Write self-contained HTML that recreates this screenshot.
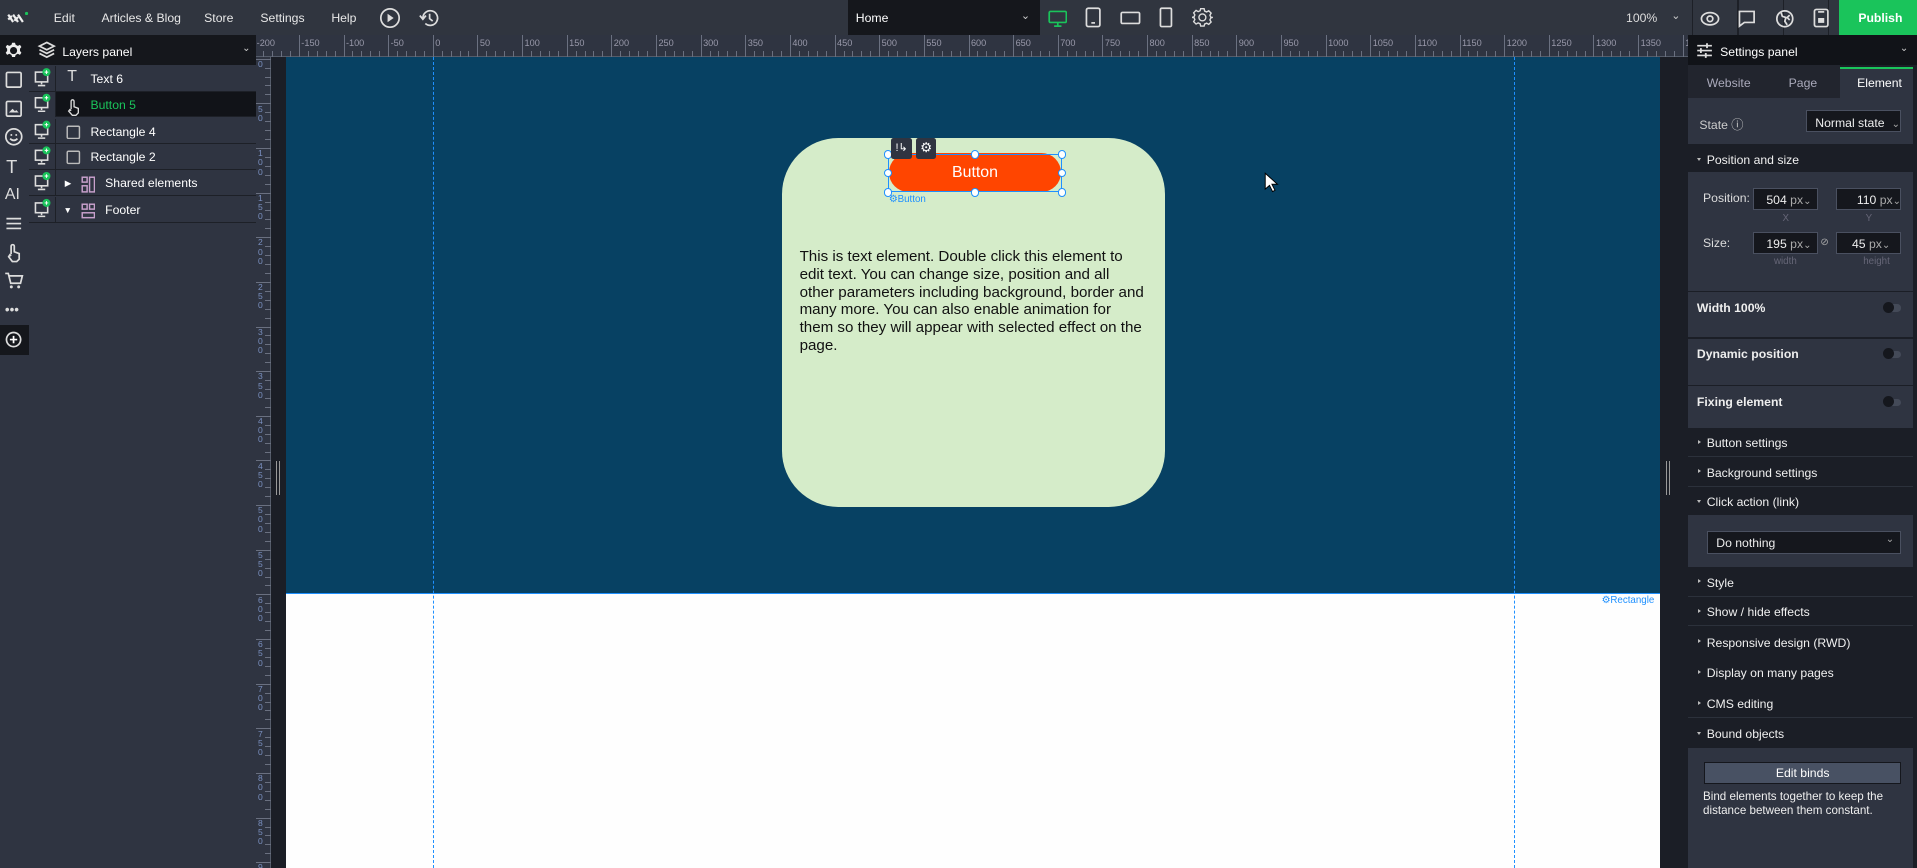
<!DOCTYPE html>
<html><head><meta charset="utf-8">
<style>
*{box-sizing:border-box;margin:0;padding:0}
html,body{width:1917px;height:868px;overflow:hidden;background:#1b1e26}
#root{zoom:1.22258;width:1568px;height:710px;position:relative;font-family:"Liberation Sans",sans-serif;color:#fff;font-size:10px;overflow:hidden}
.abs{position:absolute}
.top{left:0;top:0;width:1568px;height:29px;background:#30353f}
.menu{top:9px;font-size:10px;color:#e8e8e8}
.ico{stroke:#ddd;fill:none;stroke-width:1.4}
.lp{left:24px;top:29px;width:185px;height:681px;background:#2f3441}
.lrow{position:absolute;left:0;width:185px;height:21px;border-bottom:1px solid #1d2027}
.lrow .mon{position:absolute;left:0;top:0;width:22px;height:21px;border-right:1px solid #1d2027}
.lrow span{position:absolute;top:5px;font-size:10px}
.rp{left:1381px;top:29px;width:187px;height:681px;background:#1b1e26}
.sec{position:absolute;left:0;width:184px;height:24px;border-bottom:1px solid #2c313b;font-size:10px;color:#f0f0f0;padding:7px 0 0 15px}
.sec:before{content:"";position:absolute;left:8px;top:10px;border-left:3px solid #bbb;border-top:2px solid transparent;border-bottom:2px solid transparent}
.sec.open:before{left:7px;top:11px;border-top:3px solid #bbb;border-left:2px solid transparent;border-right:2px solid transparent;border-bottom:0}
.blk{position:absolute;left:0;width:184px;background:#2f3441}
.inp{position:absolute;height:18px;background:#15171d;border:1px solid #4a5060;font-size:10px;color:#eee;white-space:nowrap;overflow:hidden}
.tog{position:absolute;width:14px;height:6px;border-radius:3px;background:#444a58}
.tog:before{content:"";position:absolute;left:-1px;top:-2px;width:9px;height:9px;border-radius:50%;background:#15171d}
.hd{position:absolute;width:7px;height:7px;border-radius:50%;background:#fff;border:1.2px solid #1e90ff}
</style></head><body><div id="root">

<div class="abs top"></div>
<svg class="abs" style="left:6px;top:9px" width="18" height="12" viewBox="0 0 18 12"><path d="M1 3l4 6M5 3l4 6M9 3l4 6M1 7l3-3M6 8l3-3" stroke="#eee" stroke-width="1.8" fill="none"/><circle cx="16" cy="2" r="1.3" fill="#1ac45b"/></svg>
<div class="abs menu" style="left:44px">Edit</div>
<div class="abs menu" style="left:83px">Articles &amp; Blog</div>
<div class="abs menu" style="left:167px">Store</div>
<div class="abs menu" style="left:213px">Settings</div>
<div class="abs menu" style="left:271px">Help</div>
<svg class="abs" style="left:310px;top:6px" width="18" height="18"><circle cx="9" cy="9" r="7.5" class="ico"/><path d="M7 5.5v7l5-3.5z" fill="#ddd"/></svg>
<svg class="abs" style="left:342px;top:6px" width="18" height="18"><path d="M4 9a6 6 0 1 1 2 4.5" class="ico"/><path d="M1.5 7l2.5 3 2.5-3" class="ico"/><path d="M9.5 5.5v4l2.5 2" class="ico"/></svg>
<div class="abs" style="left:694px;top:0;width:157px;height:29px;background:#15171c"></div>
<div class="abs" style="left:700px;top:9px;font-size:10px">Home</div>
<div class="abs" style="left:835px;top:7px;font-size:9px;color:#ccc">⌄</div>
<svg class="abs" style="left:857px;top:7px" width="16" height="16"><rect x="1" y="2" width="14" height="9" rx="1" fill="none" stroke="#1ac45b" stroke-width="1.4"/><path d="M8 11v3M5 14h6" stroke="#1ac45b" stroke-width="1.4"/></svg>
<svg class="abs" style="left:887px;top:6px" width="16" height="18"><rect x="2" y="1" width="11" height="15" rx="1.5" class="ico"/><path d="M6 13h3" class="ico"/></svg>
<svg class="abs" style="left:916px;top:8px" width="18" height="14"><rect x="1" y="2" width="15" height="9" rx="1" class="ico"/></svg>
<svg class="abs" style="left:947px;top:6px" width="14" height="18"><rect x="2" y="1" width="9" height="15" rx="1" class="ico"/></svg>
<svg class="abs" style="left:975px;top:6px" width="17" height="17" viewBox="0 0 24 24"><path d="M12 8a4 4 0 1 0 0 8 4 4 0 0 0 0-8zM10 2h4l.6 2.7 2.3 1 2.4-1.4 2.8 2.8-1.4 2.4 1 2.3L24 12v0l-2.3.6-1 2.3 1.4 2.4-2.8 2.8-2.4-1.4-2.3 1L14 22h-4l-.6-2.7-2.3-1-2.4 1.4-2.8-2.8 1.4-2.4-1-2.3L0 12l2.3-.6 1-2.3L1.9 6.7 4.7 3.9l2.4 1.4 2.3-1z" fill="none" stroke="#ddd" stroke-width="1.6"/></svg>
<div class="abs" style="left:1330px;top:9px;font-size:10px;color:#ddd">100%</div>
<div class="abs" style="left:1367px;top:7px;font-size:9px;color:#ccc">⌄</div>
<div class="abs" style="left:1384px;top:0;width:1px;height:29px;background:#1d2027"></div>
<div class="abs" style="left:1421px;top:0;width:1px;height:29px;background:#1d2027"></div>
<div class="abs" style="left:1458px;top:0;width:1px;height:29px;background:#1d2027"></div>
<div class="abs" style="left:1495px;top:0;width:1px;height:29px;background:#1d2027"></div>
<svg class="abs" style="left:1390px;top:7px" width="18" height="16"><ellipse cx="9" cy="8" rx="7" ry="5" class="ico"/><circle cx="9" cy="8" r="2.3" class="ico"/></svg>
<svg class="abs" style="left:1421px;top:7px" width="16" height="16"><path d="M2 2h12v9H6l-4 3z" class="ico"/></svg>
<svg class="abs" style="left:1452px;top:7px" width="16" height="16"><circle cx="8" cy="8" r="6.5" class="ico"/><path d="M5 3l1 3 3 1-1 3 2 3M12 5l-2 2 2 2" class="ico"/></svg>
<svg class="abs" style="left:1482px;top:6px" width="16" height="18"><rect x="2" y="2" width="11" height="14" rx="1.5" class="ico"/><rect x="5" y="9" width="5" height="4" fill="#ddd"/><path d="M5 4h5" class="ico"/></svg>
<div class="abs" style="left:1504px;top:0;width:64px;height:29px;background:#1ac45b"></div>
<div class="abs" style="left:1520px;top:9px;font-size:10px;font-weight:bold">Publish</div>

<div class="abs" style="left:0;top:29px;width:24px;height:681px;background:#2f3441"></div>
<div class="abs" style="left:0;top:29px;width:24px;height:24px;background:#15171c"></div>
<svg class="abs" style="left:4px;top:34px" width="14" height="14" viewBox="0 0 24 24"><path d="M12 7a5 5 0 1 0 0 10 5 5 0 0 0 0-10zM10 1h4l1 3 3 1.5 3-1.5 2 3-2 2.5v3l2 2.5-2 3-3-1.5-3 1.5-1 3h-4l-1-3-3-1.5-3 1.5-2-3 2-2.5v-3L1 7l2-3 3 1.5 3-1.5z" fill="#eee"/><circle cx="12" cy="12" r="3.5" fill="#15171c"/></svg>
<svg class="abs" style="left:3px;top:57px" width="16" height="16"><rect x="2" y="2" width="12" height="12" rx="1" class="ico"/></svg>
<svg class="abs" style="left:3px;top:81px" width="16" height="16"><rect x="2" y="2" width="12" height="12" rx="1" class="ico"/><path d="M4 11l3-3 2 2 1-1 2 2z" fill="#ddd"/></svg>
<svg class="abs" style="left:3px;top:104px" width="16" height="16"><circle cx="8" cy="8" r="6.5" class="ico"/><circle cx="6" cy="6.5" r=".8" fill="#ddd"/><circle cx="10" cy="6.5" r=".8" fill="#ddd"/><path d="M5 9.5q3 3 6 0" class="ico"/></svg>
<div class="abs" style="left:5px;top:128px;font-size:15px;color:#ddd">T</div>
<div class="abs" style="left:4px;top:152px;font-size:13px;color:#ddd">AI</div>
<svg class="abs" style="left:3px;top:176px" width="16" height="14"><path d="M2 3h12M2 7h12M2 11h12" class="ico"/></svg>
<svg class="abs" style="left:4px;top:198px" width="14" height="18"><path d="M5 10V3.5a1.3 1.3 0 0 1 2.6 0V8l4 1.5V14l-2 2H6L3 12l1-1.5 1 1" class="ico"/></svg>
<svg class="abs" style="left:3px;top:222px" width="17" height="16"><path d="M1 2h2.5l2 8h8l1.5-6H4.5" class="ico"/><circle cx="6" cy="13" r="1.2" fill="#ddd"/><circle cx="12" cy="13" r="1.2" fill="#ddd"/></svg>
<div class="abs" style="left:4px;top:247px;font-size:11px;color:#ddd;letter-spacing:0">•••</div>
<div class="abs" style="left:0;top:266px;width:24px;height:24px;background:#15171c"></div>
<svg class="abs" style="left:4px;top:271px" width="14" height="14"><circle cx="7" cy="7" r="5.8" class="ico" stroke="#fff"/><path d="M7 4v6M4 7h6" stroke="#fff" stroke-width="1.4"/></svg>

<div class="abs lp"></div>
<div class="abs" style="left:24px;top:29px;width:185px;height:24px;background:#15171c"></div>
<svg class="abs" style="left:30px;top:33px" width="16" height="16"><path d="M8 2l6 3-6 3-6-3zM2 8l6 3 6-3M2 11l6 3 6-3" class="ico"/></svg>
<div class="abs" style="left:51px;top:37px;font-size:10px">Layers panel</div>
<div class="abs" style="left:198px;top:35px;font-size:8px;color:#ccc">⌄</div>
<div class="abs" style="left:24px;top:54px;width:185px">
 <div class="lrow" style="top:0"><div class="mon"></div><span style="left:50px">Text 6</span><span style="left:31px;top:2px;font-size:13px;color:#ddd">T</span></div>
 <div class="lrow" style="top:21px;background:#111318"><div class="mon" style="background:#2f3441"></div><span style="left:50px;color:#1ac45b">Button 5</span></div>
 <div class="lrow" style="top:43px"><div class="mon"></div><span style="left:50px">Rectangle 4</span></div>
 <div class="lrow" style="top:64px"><div class="mon"></div><span style="left:50px">Rectangle 2</span></div>
 <div class="lrow" style="top:85px"><div class="mon"></div><span style="left:62px">Shared elements</span><span style="left:29px;font-size:7px;top:7px">▶</span></div>
 <div class="lrow" style="top:107px"><div class="mon"></div><span style="left:62px">Footer</span><span style="left:28px;font-size:7px;top:7px">▼</span></div>
</div>
<svg class="abs" style="left:27px;top:54px" width="20" height="130">
 <g id="m"><rect x="2" y="5" width="10" height="8" fill="none" stroke="#ddd" stroke-width="1.3"/><path d="M7 13v2M4 16h6" stroke="#ddd" stroke-width="1.3"/><circle cx="11" cy="5" r="3.3" fill="#1ac45b"/><path d="M9.5 5h3M11 3.5v3" stroke="#fff" stroke-width=".8"/></g>
 <use href="#m" y="21"/><use href="#m" y="43"/><use href="#m" y="64"/><use href="#m" y="85"/><use href="#m" y="107"/>
</svg>
<svg class="abs" style="left:53px;top:79px" width="14" height="16"><path d="M5 10V3.5a1.2 1.2 0 0 1 2.4 0V8l3.5 1.3V13l-2 2H6L3 11.5l1-1.2 1 1" stroke="#ddd" fill="none" stroke-width="1.1"/></svg>
<svg class="abs" style="left:54px;top:102px" width="12" height="12"><rect x="1" y="1" width="10" height="10" rx="1" fill="none" stroke="#bbb" stroke-width="1.2"/></svg>
<svg class="abs" style="left:54px;top:123px" width="12" height="12"><rect x="1" y="1" width="10" height="10" rx="1" fill="none" stroke="#bbb" stroke-width="1.2"/></svg>
<svg class="abs" style="left:66px;top:144px" width="12" height="14"><rect x="1" y="1" width="4" height="4" fill="none" stroke="#c8a0cc" stroke-width="1.2"/><rect x="1" y="8" width="4" height="5" fill="none" stroke="#c8a0cc" stroke-width="1.2"/><rect x="7" y="1" width="4" height="12" fill="none" stroke="#c8a0cc" stroke-width="1.2"/></svg>
<svg class="abs" style="left:66px;top:166px" width="12" height="14"><rect x="1" y="1" width="4" height="4" fill="none" stroke="#c8a0cc" stroke-width="1.2"/><rect x="7" y="1" width="4" height="4" fill="none" stroke="#c8a0cc" stroke-width="1.2"/><rect x="1" y="8" width="10" height="4" fill="none" stroke="#c8a0cc" stroke-width="1.2"/></svg>

<div class="abs" style="left:209px;top:29px;width:1172px;height:18px;background:#2f3441;border-bottom:1px solid #555c6a"></div>
<div class="abs" style="left:209px;top:47px;width:13px;height:663px;background:#2f3441;border-right:1px solid #555c6a"></div>
<div id="hr" class="abs" style="left:0;top:29px;width:1381px;height:18px;overflow:hidden"></div>
<div id="vr" class="abs" style="left:209px;top:47px;width:13px;height:663px;overflow:hidden"></div>

<div class="abs" style="left:222px;top:47px;width:1159px;height:663px;background:#1b1e26"></div>
<div class="abs" style="left:234px;top:47px;width:1124px;height:438px;background:#074163"></div>
<div class="abs" style="left:234px;top:485px;width:1124px;height:1px;background:#1e90ff"></div>
<div class="abs" style="left:234px;top:486px;width:1124px;height:224px;background:#fefefe"></div>
<div class="abs" style="left:354px;top:47px;height:663px;border-left:1px dashed #1e90ff"></div>
<div class="abs" style="left:1238px;top:47px;height:663px;border-left:1px dashed #1e90ff"></div>
<div class="abs" style="left:226px;top:377px;width:3px;height:28px;border-left:1px solid #999;border-right:1px solid #999"></div>
<div class="abs" style="left:1363px;top:377px;width:3px;height:28px;border-left:1px solid #999;border-right:1px solid #999"></div>
<div class="abs" style="left:1310px;top:487px;font-size:8px;color:#1e90ff">⚙Rectangle</div>

<div class="abs" style="left:640px;top:113px;width:313px;height:302px;background:#d5ecc9;border-radius:46px"></div>
<div class="abs" style="left:727px;top:125px;width:141px;height:32px;background:#ff4500;border-radius:16px"></div>
<div class="abs" style="left:726px;top:134px;width:143px;text-align:center;font-size:13px;color:#fff">Button</div>
<div class="abs" style="left:726px;top:126px;width:143px;height:31px;border:1px solid #1e90ff"></div>
<div class="hd" style="left:723px;top:123px"></div><div class="hd" style="left:794px;top:123px"></div><div class="hd" style="left:865px;top:123px"></div>
<div class="hd" style="left:723px;top:138px"></div><div class="hd" style="left:865px;top:138px"></div>
<div class="hd" style="left:723px;top:154px"></div><div class="hd" style="left:794px;top:154px"></div><div class="hd" style="left:865px;top:154px"></div>
<div class="abs" style="left:729px;top:113px;width:17px;height:17px;background:#2f3441;border-radius:2px;font-size:9px;text-align:center;line-height:17px">!↳</div>
<div class="abs" style="left:749px;top:113px;width:17px;height:17px;background:#2f3441;border-radius:2px;font-size:11px;text-align:center;line-height:17px">⚙</div>
<div class="abs" style="left:727px;top:159px;font-size:8px;color:#1e90ff">⚙Button</div>
<div class="abs" style="left:654px;top:203px;width:284px;font-size:12.4px;line-height:14.5px;color:#111">This is text element. Double click this element to edit text. You can change size, position and all other parameters including background, border and many more. You can also enable animation for them so they will appear with selected effect on the page.</div>
<svg class="abs" style="left:1034px;top:141px" width="12" height="17"><path d="M1 1v13l3.5-3 2.5 5 2-1-2.5-5H11z" fill="#fff" stroke="#000" stroke-width=".8"/></svg>

<div class="abs rp">
 <div class="abs" style="left:0;top:0;width:187px;height:24px;background:#111318"></div>
 <svg class="abs" style="left:6px;top:5px" width="14" height="14"><path d="M1 3h12M1 7h12M1 11h12" stroke="#ddd" stroke-width="1.3"/><path d="M9 1v4M4 5v4M8 9v4" stroke="#ddd" stroke-width="1.5"/></svg>
 <div class="abs" style="left:26px;top:8px;font-size:10px">Settings panel</div>
 <div class="abs" style="left:173px;top:6px;font-size:8px;color:#ccc">⌄</div>
 <div class="abs" style="left:0;top:24px;width:124px;height:27px;background:#22252e"></div>
 <div class="abs" style="left:124px;top:26px;width:62px;height:25px;background:#2f3441;border-top:2px solid #1ac45b"></div>
 <div class="abs" style="left:15px;top:33px;font-size:10px;color:#aab">Website</div>
 <div class="abs" style="left:82px;top:33px;font-size:10px;color:#aab">Page</div>
 <div class="abs" style="left:138px;top:33px;font-size:10px;color:#fff">Element</div>

 <div class="blk" style="top:51px;height:38px"></div>
 <div class="abs" style="left:9px;top:65px;font-size:10px;color:#ccc">State ⓘ</div>
 <div class="inp" style="left:96px;top:61px;width:78px;height:18px;padding:4px 0 0 7px">Normal state <span style="color:#aaa;font-size:8px;margin-left:3px">⌄</span></div>

 <div class="sec open" style="top:89px;height:23px;border:0">Position and size</div>
 <div class="blk" style="top:112px;height:97px"></div>
 <div class="abs" style="left:12px;top:127px;font-size:10px;color:#ddd">Position:</div>
 <div class="inp" style="left:53px;top:125px;width:53px;padding:3px 0 0 10px">504 <span style="color:#aaa">px<small>⌄</small></span></div>
 <div class="inp" style="left:121px;top:125px;width:53px;padding:3px 0 0 16px">110 <span style="color:#aaa">px<small>⌄</small></span></div>
 <div class="abs" style="left:77px;top:145px;font-size:8px;color:#667">X</div>
 <div class="abs" style="left:145px;top:145px;font-size:8px;color:#667">Y</div>
 <div class="abs" style="left:12px;top:164px;font-size:10px;color:#ddd">Size:</div>
 <div class="inp" style="left:53px;top:161px;width:53px;padding:3px 0 0 10px">195 <span style="color:#aaa">px<small>⌄</small></span></div>
 <div class="abs" style="left:108px;top:165px;font-size:8px;color:#aaa">⊘</div>
 <div class="inp" style="left:121px;top:161px;width:53px;padding:3px 0 0 12px">45 <span style="color:#aaa">px<small>⌄</small></span></div>
 <div class="abs" style="left:70px;top:180px;font-size:8px;color:#667">width</div>
 <div class="abs" style="left:143px;top:180px;font-size:8px;color:#667">height</div>

 <div class="blk" style="top:210px;height:37px"></div>
 <div class="abs" style="left:7px;top:217px;font-size:10px;font-weight:bold;color:#eee">Width 100%</div>
 <div class="tog" style="left:160px;top:220px"></div>
 <div class="blk" style="top:248px;height:38px"></div>
 <div class="abs" style="left:7px;top:255px;font-size:10px;font-weight:bold;color:#eee">Dynamic position</div>
 <div class="tog" style="left:160px;top:258px"></div>
 <div class="blk" style="top:287px;height:34px"></div>
 <div class="abs" style="left:7px;top:294px;font-size:10px;font-weight:bold;color:#eee">Fixing element</div>
 <div class="tog" style="left:160px;top:297px"></div>

 <div class="sec" style="top:321px">Button settings</div>
 <div class="sec" style="top:345px">Background settings</div>
 <div class="sec open" style="top:369px;border:0">Click action (link)</div>
 <div class="blk" style="top:392px;height:43px"></div>
 <div class="inp" style="left:15px;top:405px;width:159px;height:19px;padding:4px 0 0 7px">Do nothing<span style="position:absolute;right:5px;top:2px;font-size:8px;color:#aaa">⌄</span></div>
 <div class="sec" style="top:435px">Style</div>
 <div class="sec" style="top:459px">Show / hide effects</div>
 <div class="sec" style="top:484px;border:0">Responsive design (RWD)</div>
 <div class="sec" style="top:509px;border:0">Display on many pages</div>
 <div class="sec" style="top:534px">CMS editing</div>
 <div class="sec open" style="top:559px;border:0">Bound objects</div>
 <div class="blk" style="top:583px;height:98px"></div>
 <div class="abs" style="left:13px;top:594px;width:161px;height:18px;background:#485163;border:1px solid #15171d;text-align:center;font-size:10px;padding-top:3px">Edit binds</div>
 <div class="abs" style="left:12px;top:617px;width:170px;font-size:9.5px;line-height:12px;color:#eee">Bind elements together to keep the distance between them constant.</div>
 <div class="abs" style="left:184px;top:24px;width:3px;height:657px;background:#1b1e26"></div>
</div>

<script>
var hr=document.getElementById('hr'),h='';
for(var v=-200;v<=1400;v+=50){var x=357+v*0.7303;
 h+='<div style="position:absolute;left:'+(x-3)+'px;top:0;height:18px;border-left:1px solid #6a7080"></div>';
 h+='<div style="position:absolute;left:'+(x-1)+'px;top:2px;font-size:7.5px;color:#99a">'+v+'</div>';
 for(var k=1;k<5;k++)h+='<div style="position:absolute;left:'+(x-3+k*7.3)+'px;top:13px;height:5px;border-left:1px solid #6a7080"></div>';}
hr.innerHTML='<div style="position:absolute;left:209px;top:0;width:1172px;height:18px;overflow:hidden"><div style="position:absolute;left:-209px;top:0;width:1400px;height:18px">'+h+'</div></div>';
var vr=document.getElementById('vr'),s='';
for(var v=0;v<=900;v+=50){var y=1+v*0.7303;
 s+='<div style="position:absolute;left:0;top:'+y+'px;width:13px;border-top:1px solid #6a7080"></div>';
 var t=String(v).split('').join('<br>');
 s+='<div style="position:absolute;left:2px;top:'+(y+1)+'px;font-size:7px;line-height:7.5px;color:#7a90c0">'+t+'</div>';
 for(var k=1;k<5;k++)s+='<div style="position:absolute;left:8px;top:'+(y+k*7.3)+'px;width:5px;border-top:1px solid #6a7080"></div>';}
vr.innerHTML=s;
</script>
</div></body></html>
